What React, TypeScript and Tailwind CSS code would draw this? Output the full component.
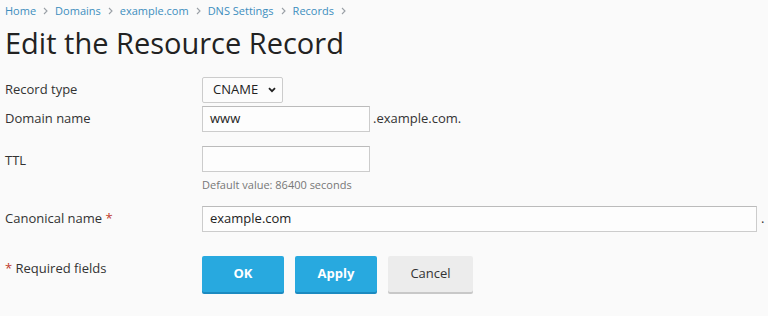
import React from "react";

const crumbs = ["Home", "Domains", "example.com", "DNS Settings", "Records"];

function Chevron() {
  return (
    <svg width="5" height="8" viewBox="0 0 5 8" className="mx-[7px] inline-block">
      <path d="M1 1l3 3L1 7" fill="none" stroke="#9aa0a6" strokeWidth="1.1" />
    </svg>
  );
}

export default function App() {
  return (
    <div
      className="w-[768px] h-[316px] bg-[#fafafa] text-[#333] overflow-hidden"
      style={{ fontFamily: '"Open Sans", "Noto Sans", sans-serif' }}
    >
      <div className="pl-[5px] pt-[2px]">
        <div className="flex items-center text-[11px] leading-[18px] text-[#3d8ebe]">
          {crumbs.map((c) => (
            <span key={c} className="flex items-center">
              <span>{c}</span>
              <Chevron />
            </span>
          ))}
        </div>
        <h1 className="text-[29px] leading-[38px] text-[#222] mt-[4px] font-normal">
          Edit the Resource Record
        </h1>

        <div className="mt-[15px] text-[13px]">
          <div className="flex items-center h-[26px]">
            <div className="w-[197px]">Record type</div>
            <div className="w-[81px] h-[26px] border border-[#ccc] rounded-[2px] bg-[#fcfcfc] flex items-center pl-[10px] pr-[6px] justify-between">
              <span className="text-[#222]">CNAME</span>
              <svg width="8" height="6" viewBox="0 0 8 6">
                <path d="M1 1.2l3 3 3-3" fill="none" stroke="#222" strokeWidth="1.8" />
              </svg>
            </div>
          </div>

          <div className="flex items-center h-[26px] mt-[3px]">
            <div className="w-[197px]">Domain name</div>
            <div className="w-[168px] h-[26px] border border-[#ccc] border-t-[#bbb] bg-[#fdfdfd] flex items-center pl-[7px] text-[#222]">
              www
            </div>
            <span className="ml-[3px]">.example.com.</span>
          </div>

          <div className="flex mt-[14px]">
            <div className="w-[197px] pt-[5px]">TTL</div>
            <div>
              <div className="w-[168px] h-[26px] border border-[#ccc] border-t-[#bbb] bg-[#fdfdfd]" />
              <div className="text-[11px] text-[#777] mt-[5px] leading-[15px]">
                Default value: 86400 seconds
              </div>
            </div>
          </div>

          <div className="flex items-center h-[26px] mt-[14px]">
            <div className="w-[197px]">
              Canonical name <span className="text-[#c0392b]">*</span>
            </div>
            <div className="w-[555px] h-[26px] border border-[#ccc] border-t-[#bbb] bg-[#fdfdfd] flex items-center pl-[7px] text-[#222]">
              example.com
            </div>
            <span className="ml-[4px]">.</span>
          </div>

          <div className="flex mt-[24px]">
            <div className="w-[197px] pt-[3px]">
              <span className="text-[#c0392b]">*</span> Required fields
            </div>
            <div className="flex gap-[11px]">
              <button className="w-[82px] h-[36px] rounded-[2px] bg-[#28a9df] shadow-[0_2px_0_#1c8ac0] text-white font-bold text-[13px]">
                OK
              </button>
              <button className="w-[82px] h-[36px] rounded-[2px] bg-[#28a9df] shadow-[0_2px_0_#1c8ac0] text-white font-bold text-[13px]">
                Apply
              </button>
              <button className="w-[85px] h-[36px] rounded-[2px] bg-[#ececec] shadow-[0_2px_0_#c8c8c8] text-[#333] text-[13px]">
                Cancel
              </button>
            </div>
          </div>
        </div>
      </div>
    </div>
  );
}
